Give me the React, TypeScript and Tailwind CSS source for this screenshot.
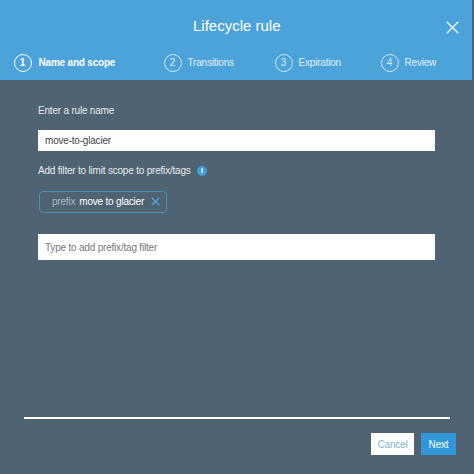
import { X } from "lucide-react";

const steps = [
  { n: 1, label: "Name and scope", w: "w-[150px]", active: true },
  { n: 2, label: "Transitions", w: "w-[111px]", active: false },
  { n: 3, label: "Expiration", w: "w-[106px]", active: false },
  { n: 4, label: "Review", w: "w-[80px]", active: false },
];

const App = () => {
  return (
    <div className="w-[474px] h-[474px] flex flex-col bg-[#4f6372] font-['Liberation_Sans',Arial,sans-serif] text-[10px] tracking-[-0.2px] overflow-hidden">
      <div className="h-[80px] w-[472px] bg-[#4ba3da] text-white shrink-0">
        <div className="h-[48px] flex items-end justify-between pl-[193px] pr-[9px]">
          <h1 className="text-[15px] tracking-normal leading-[20px] mb-[12px]">Lifecycle rule</h1>
          <button className="mb-[10px]"><X size={21} strokeWidth={1.5} /></button>
        </div>
        <div className="flex pl-[13.5px] h-[24px] items-center mt-[2px] pt-[1px]">
          {steps.map(s => (
            <div key={s.n} className={`${s.w} flex items-center gap-[6px]`}>
              <span className={`w-[18px] h-[18px] rounded-full flex items-center justify-center text-[10px] ${s.active ? "border-[1.5px] border-white text-white font-bold" : "border border-[#cfe6f5] text-[#d9ecf8]"}`}>
                {s.n}
              </span>
              <span className={s.active ? "font-bold text-white ml-[1px]" : "text-[#e3f1fa]"}>{s.label}</span>
            </div>
          ))}
        </div>
      </div>

      <div className="flex-1 flex flex-col px-[24px]">
        <div className="pl-[14px] pr-[15px]">
          <label className="block mt-[23px] leading-[16px] text-[#e6eaed]">Enter a rule name</label>
          <div className="mt-[11px] h-[21px] bg-white flex items-center px-[7px] text-[#444]">move-to-glacier</div>
          <div className="mt-[12px] flex items-center gap-[6px] leading-[16px] text-[#e6eaed]">
            <span>Add filter to limit scope to prefix/tags</span>
            <span className="w-[10px] h-[10px] rounded-full bg-[#3f9fdc] text-white text-[8px] font-bold flex items-center justify-center">i</span>
          </div>
          <div className="mt-[12px] ml-[1px] w-[128px] h-[22px] rounded-[4px] border border-[#4a8fb8] flex items-center pl-[12px] pb-[2px] whitespace-nowrap">
            <span className="text-[#a9b8c3]">prefix</span>
            <span className="text-white ml-[4px]">move to glacier</span>
            <X size={13} strokeWidth={2.5} className="text-[#4ba3da] ml-[5px] shrink-0" />
          </div>
          <div className="mt-[21px] h-[26px] bg-white flex items-center px-[7px] text-[#777]">Type to add prefix/tag filter</div>
        </div>

        <div className="mt-auto h-[2px] bg-white" />
        <div className="h-[54px] flex justify-end items-start pt-[14px] gap-[7px] mr-[-6px] mb-[1px]">
          <button className="w-[43px] h-[22px] bg-white text-[#7fb3d5]">Cancel</button>
          <button className="w-[35px] h-[22px] bg-[#2f96d8] text-white">Next</button>
        </div>
      </div>
    </div>
  );
};

export default App;
